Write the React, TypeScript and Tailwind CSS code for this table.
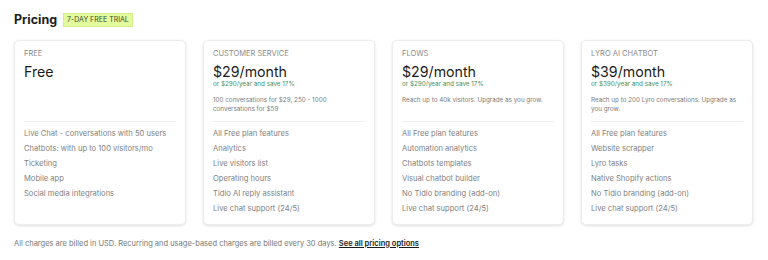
import React from 'react';

type Plan = {
  label: string;
  price: string;
  yearly?: string;
  desc?: string;
  features: string[];
};

const plans: Plan[] = [
  {
    label: 'Free',
    price: 'Free',
    features: [
      'Live Chat - conversations with 50 users',
      'Chatbots: with up to 100 visitors/mo',
      'Ticketing',
      'Mobile app',
      'Social media integrations',
    ],
  },
  {
    label: 'Customer Service',
    price: '$29/month',
    yearly: 'or $290/year and save 17%',
    desc: '100 conversations for $29, 250 - 1000 conversations for $59',
    features: [
      'All Free plan features',
      'Analytics',
      'Live visitors list',
      'Operating hours',
      'Tidio AI reply assistant',
      'Live chat support (24/5)',
    ],
  },
  {
    label: 'Flows',
    price: '$29/month',
    yearly: 'or $290/year and save 17%',
    desc: 'Reach up to 40k visitors. Upgrade as you grow.',
    features: [
      'All Free plan features',
      'Automation analytics',
      'Chatbots templates',
      'Visual chatbot builder',
      'No Tidio branding (add-on)',
      'Live chat support (24/5)',
    ],
  },
  {
    label: 'Lyro AI Chatbot',
    price: '$39/month',
    yearly: 'or $390/year and save 17%',
    desc: 'Reach up to 200 Lyro conversations. Upgrade as you grow.',
    features: [
      'All Free plan features',
      'Website scrapper',
      'Lyro tasks',
      'Native Shopify actions',
      'No Tidio branding (add-on)',
      'Live chat support (24/5)',
    ],
  },
];

const PlanCard: React.FC<{ plan: Plan }> = ({ plan }) => (
  <div className="bg-white rounded-[5px] border border-[#ededed] shadow-[0_1px_3px_rgba(0,0,0,0.13)] px-[9px] pt-[8px] flex flex-col">
    <div className="text-[7.5px] leading-[10px] uppercase text-[#8a8a8a]">{plan.label}</div>
    <div className="text-[14.2px] leading-[16px] mt-[5px] text-[#1b1b1b]">{plan.price}</div>
    <div className="h-[9px] text-[6.3px] leading-[9px] text-[#3f8f5c]">{plan.yearly}</div>
    <div className="h-[32px] pt-[7px] pr-[4px] text-[6.3px] leading-[9px] text-[#7a7a7a]">{plan.desc}</div>
    <div className="border-t border-[#eeeeee] pt-[4px] flex flex-col">
      {plan.features.map((f) => (
        <div key={f} className="text-[7.6px] leading-[15px] text-[#7f7f7f] whitespace-nowrap">
          {f}
        </div>
      ))}
    </div>
  </div>
);

export default function App() {
  return (
    <div className="w-[768px] h-[260px] bg-white px-[14px] pt-[12px] font-['Inter',sans-serif]">
      <div className="flex items-center gap-[6px] h-[16px]">
        <h2 className="text-[12.5px] font-bold text-[#1b1b1b] leading-[16px]">Pricing</h2>
        <span className="bg-[#e3fa9d] text-[#3a4a2c] text-[7px] leading-[12px] px-[3px] uppercase border border-[#d2ee88]">
          7-day free trial
        </span>
      </div>
      <div className="grid grid-cols-4 gap-[17px] mt-[12px] h-[185px] pr-[1px]">
        {plans.map((p) => (
          <PlanCard key={p.label} plan={p} />
        ))}
      </div>
      <div className="mt-[12.5px] text-[7.5px] leading-[11px] text-[#777777]">
        All charges are billed in USD. Recurring and usage-based charges are billed every 30 days.{' '}
        <a className="font-semibold text-[#1b1b1b] underline">See all pricing options</a>
      </div>
    </div>
  );
}
